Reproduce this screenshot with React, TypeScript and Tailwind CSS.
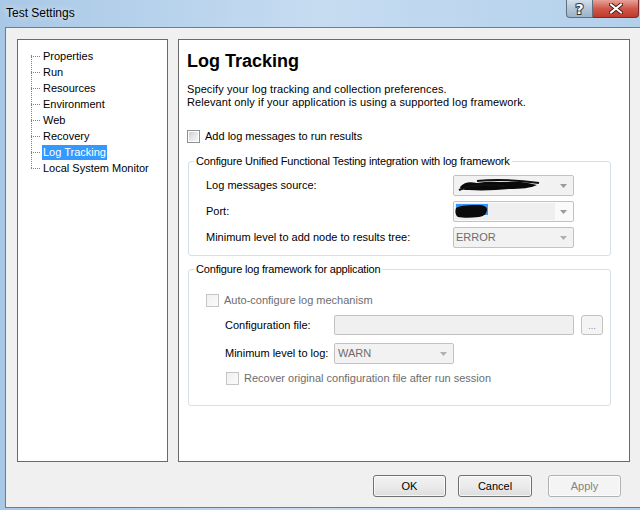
import React from "react";

const font = { fontFamily: '"Liberation Sans", Arial, sans-serif' };

function Arrow({ color = "#9a9a9a" }: { color?: string }) {
  return (
    <svg width="7" height="4" viewBox="0 0 7 4" className="shrink-0">
      <path d="M0 0 H7 L3.5 4 Z" fill={color} />
    </svg>
  );
}

function Check({ disabled = false }: { disabled?: boolean }) {
  return (
    <div
      className={
        disabled
          ? "w-[13px] h-[13px] shrink-0 border border-[#c5c5c5] bg-gradient-to-br from-[#f0f0f0] to-[#fbfbfb]"
          : "w-[13px] h-[13px] shrink-0 border border-[#8e8f8f] bg-white p-[1px]"
      }
    >
      {!disabled && (
        <div className="w-full h-full bg-gradient-to-br from-[#cfcfcf] via-[#e6e6e6] to-[#f6f6f6]" />
      )}
    </div>
  );
}

function Btn({ label, disabled = false, className = "" }: { label: string; disabled?: boolean; className?: string }) {
  return (
    <div
      className={
        (disabled
          ? "border-[#adb2b5] bg-[#f4f4f4] text-[#838383] "
          : "border-[#707070] bg-gradient-to-b from-[#f2f2f2] via-[#ebebeb] to-[#dddddd] text-black ") +
        "h-[22px] rounded-[3px] border flex items-center justify-center text-[11px] shadow-[inset_0_0_0_1px_rgba(255,255,255,0.7)] " +
        className
      }
    >
      {label}
    </div>
  );
}

const treeItems = [
  "Properties",
  "Run",
  "Resources",
  "Environment",
  "Web",
  "Recovery",
  "Log Tracking",
  "Local System Monitor",
];

export default function App() {
  return (
    <div
      className="w-[640px] h-[510px] overflow-hidden relative bg-gradient-to-r from-[#a9c8e6] via-[#c6dcf1] to-[#b3d0eb] text-[11px] text-black"
      style={font}
    >
      {/* title bar */}
      <div className="h-[27px] flex items-center pl-[6px] pb-[1px] text-[12px] text-black">
        <span className="[text-shadow:0_0_6px_rgba(255,255,255,0.9)]">Test Settings</span>
      </div>
      {/* caption buttons */}
      <div className="absolute top-0 left-[566px] flex">
        <div className="w-[27px] h-[18px] rounded-bl-[4px] border border-t-0 border-[#5f6f80] bg-gradient-to-b from-[#d3dfeb] via-[#b3c5d8] to-[#9db2c8] flex items-center justify-center">
          <span
            className="text-[14px] font-bold text-white leading-none"
            style={{
              fontFamily: '"DejaVu Sans", sans-serif',
              WebkitTextStroke: "2px #2c3644",
              paintOrder: "stroke fill",
            }}
          >
            ?
          </span>
        </div>
        <div className="w-[46px] h-[18px] rounded-br-[4px] border border-t-0 border-l-0 border-[#7a2b2b] bg-gradient-to-b from-[#e7a198] via-[#d0584a] to-[#c0392b] flex items-center justify-center">
          <svg width="14" height="11" viewBox="0 0 14 11">
            <path d="M2 1.5 L12 9.5 M12 1.5 L2 9.5" stroke="#4a1a1a" strokeWidth="4" strokeLinecap="square" />
            <path d="M2 1.5 L12 9.5 M12 1.5 L2 9.5" stroke="#ffffff" strokeWidth="2" strokeLinecap="square" />
          </svg>
        </div>
      </div>

      {/* client area */}
      <div className="ml-[5px] h-[481px] border-l border-t border-b border-[#6e7d8c] bg-[#f0f0f0] pl-[11px] pt-[11px] flex flex-col">
        <div className="flex gap-[10px]">
          {/* tree */}
          <div className="w-[151px] h-[423px] border border-[#696969] bg-white pt-[8px] pl-[13px]">
            <div className="relative">
              <div className="absolute left-0 top-[7px] h-[113px] border-l border-dotted border-[#808080]" />
              {treeItems.map((t) => (
                <div key={t} className="h-[16px] flex items-center">
                  <div className="w-[9px] border-t border-dotted border-[#808080]" />
                  <span
                    className={
                      t === "Log Tracking"
                        ? "ml-[2px] px-[1px] h-[15px] flex items-center bg-[#3399ff] text-white"
                        : "ml-[2px] px-[1px]"
                    }
                  >
                    {t}
                  </span>
                </div>
              ))}
            </div>
          </div>

          {/* right panel */}
          <div className="w-[452px] h-[423px] border border-[#696969] bg-white pl-[8px] pt-[10px]">
            <div className="text-[18px] font-bold leading-[22px]">Log Tracking</div>
            <div className="mt-[11px] leading-[13px] tracking-[0.1px]">
              <div>Specify your log tracking and collection preferences.</div>
              <div>Relevant only if your application is using a supported log framework.</div>
            </div>
            <div className="mt-[21px] h-[13px] flex items-center gap-[5px]">
              <Check />
              <span>Add log messages to run results</span>
            </div>

            {/* group 1 */}
            <fieldset className="mt-[12px] ml-[1px] w-[423px] border border-[#d5dfe5] rounded-[3px] pl-[17px] pt-[7px] pb-[7px]">
              <legend className="-ml-[12px] px-[2px] leading-[13px] tracking-[-0.18px]">
                Configure Unified Functional Testing integration with log framework
              </legend>
              <div className="flex flex-col gap-[5px]">
                <div className="h-[21px] flex items-center">
                  <span className="w-[247px]">Log messages source:</span>
                  <div className="w-[121px] h-[21px] rounded-[2px] border border-[#c2c2c2] bg-[#f2f2f2] flex items-center pl-[3px] pr-[6px] justify-between">
                    <svg width="84" height="15" viewBox="0 0 84 15">
                      <path
                        d="M3 9 C8 3 14 4 20 5 C30 3 42 4 52 4 C60 3 70 4 80 7 C74 10 64 11 52 11 C40 12 26 13 12 12 C7 12 4 12 3 9 Z"
                        fill="#0a0a0a"
                      />
                      <path d="M2 12 C12 7 30 6 48 8 M20 3 C40 1 60 2 82 5" stroke="#111" strokeWidth="2" fill="none" />
                    </svg>
                    <Arrow />
                  </div>
                </div>
                <div className="h-[21px] flex items-center">
                  <span className="w-[247px]">Port:</span>
                  <div className="w-[121px] h-[21px] rounded-[2px] border border-[#c2c2c2] bg-[#fafafa] flex items-center pl-[1px] pr-[6px] justify-between">
                    <div className="w-[100px] h-[17px] bg-[#efefef] relative">
                      <div className="absolute left-[1px] top-[1px] w-[32px] h-[11px] bg-[#3399ff]" />
                      <svg className="absolute left-0 top-0" width="34" height="17" viewBox="0 0 34 17">
                        <path
                          d="M1 5 C6 2 14 2 24 2 C28 2 31 3 32 6 C32 10 30 13 24 14 C16 15 8 15 3 14 C0 12 0 8 1 5 Z"
                          fill="#0b0b0b"
                        />
                      </svg>
                    </div>
                    <Arrow />
                  </div>
                </div>
                <div className="h-[21px] flex items-center">
                  <span className="w-[247px]">Minimum level to add node to results tree:</span>
                  <div className="w-[121px] h-[21px] rounded-[2px] border border-[#c2c2c2] bg-[#f2f2f2] flex items-center pl-[2px] pr-[6px] justify-between text-[#6d6d6d]">
                    <span>ERROR</span>
                    <Arrow color="#b0b0b0" />
                  </div>
                </div>
              </div>
            </fieldset>

            {/* group 2 */}
            <fieldset className="mt-[7px] ml-[1px] w-[423px] border border-[#d5dfe5] rounded-[3px] pl-[17px] pt-[18px] pb-[20px]">
              <legend className="-ml-[12px] px-[2px] leading-[13px] tracking-[-0.18px]">
                Configure log framework for application
              </legend>
              <div className="h-[13px] flex items-center gap-[5px] text-[#6d6d6d]">
                <Check disabled />
                <span>Auto-configure log mechanism</span>
              </div>
              <div className="mt-[8px] pl-[19px] h-[20px] flex items-center">
                <span className="w-[109px]">Configuration file:</span>
                <div className="w-[240px] h-[20px] rounded-[2px] border border-[#c2c2c2] bg-[#f0f0f0]" />
                <div className="ml-[7px] w-[22px] h-[20px] rounded-[3px] border border-[#c2c2c2] bg-[#f4f4f4] flex items-end justify-center pb-[3px] text-[9px] leading-none text-[#8a8a8a]">
                  ...
                </div>
              </div>
              <div className="mt-[8px] pl-[19px] h-[21px] flex items-center">
                <span className="w-[109px]">Minimum level to log:</span>
                <div className="w-[120px] h-[21px] rounded-[2px] border border-[#c2c2c2] bg-[#f2f2f2] flex items-center pl-[3px] pr-[6px] justify-between text-[#6d6d6d]">
                  <span>WARN</span>
                  <Arrow color="#b0b0b0" />
                </div>
              </div>
              <div className="mt-[8px] pl-[20px] h-[13px] flex items-center gap-[5px] text-[#6d6d6d]">
                <Check disabled />
                <span>Recover original configuration file after run session</span>
              </div>
            </fieldset>
          </div>
        </div>

        {/* buttons */}
        <div className="mt-[13px] flex pl-[356px]">
          <Btn label="OK" className="w-[73px]" />
          <Btn label="Cancel" className="ml-[12px] w-[74px]" />
          <Btn label="Apply" disabled className="ml-[16px] w-[73px]" />
        </div>
      </div>
    </div>
  );
}
